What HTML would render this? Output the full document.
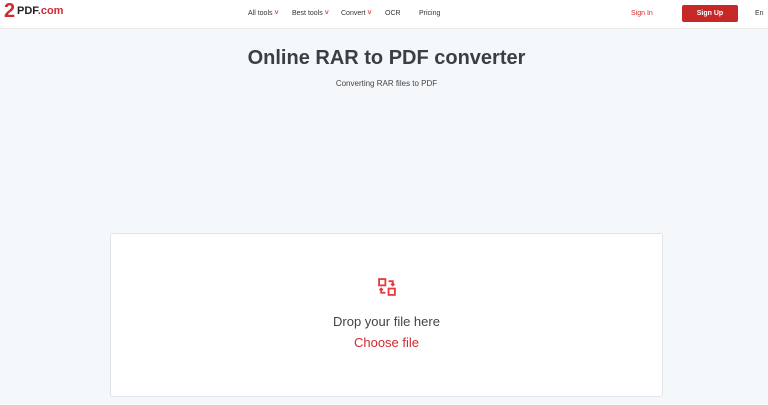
<!DOCTYPE html><html><head><style>
body{margin:0;width:768px;height:405px;background:#f5f8fb;font-family:"Liberation Sans",sans-serif;overflow:hidden;position:relative}
.hdr{position:absolute;top:0;left:0;width:768px;height:28px;background:#fff;border-bottom:1px solid #ececec}
.nav{position:absolute;top:10px;font-size:7px;color:#333}
.nav span{color:#e5393d;font-size:7px;font-weight:bold}
</style></head><body>
<div class="hdr">
<div style="position:absolute;left:4px;top:0px;font-size:20px;font-weight:bold;color:#d22a2f">2</div>
<div style="position:absolute;left:17px;top:5px;font-size:11px;font-weight:bold;color:#222">PDF<span style="color:#d22a2f">.com</span></div>
<div class="nav" style="left:248px">All tools <span>˅</span></div>
<div class="nav" style="left:292px">Best tools <span>˅</span></div>
<div class="nav" style="left:341px">Convert <span>˅</span></div>
<div class="nav" style="left:385px">OCR</div>
<div class="nav" style="left:419px">Pricing</div>
<div class="nav" style="left:631px;color:#d22a2f">Sign In</div>
<div style="position:absolute;left:682px;top:5px;width:56px;height:17px;background:#c62828;border-radius:2px;color:#fff;font-size:7px;font-weight:bold;text-align:center;line-height:17px">Sign Up</div>
<div class="nav" style="left:755px">En</div>
</div>
<div style="position:absolute;top:47px;width:773px;text-align:center;font-size:20px;font-weight:bold;color:#3a3f45">Online RAR to PDF converter</div>
<div style="position:absolute;top:79px;width:773px;text-align:center;font-size:8px;color:#444">Converting RAR files to PDF</div>
<div style="position:absolute;left:110px;top:233px;width:551px;height:162px;background:#fff;border:1px solid #e0e3e8;border-radius:3px">
<svg style="position:absolute;left:267px;top:44px" width="19" height="19" viewBox="0 0 18 18" fill="none" stroke="#e5393d" stroke-width="1.7"><rect x="1" y="1" width="6" height="6"/><rect x="10" y="10" width="6" height="6"/><path d="M10 3h4v4M12.5 5.5l1.5 1.5 1.5-1.5M7 14H3v-4M1.5 11.5L3 10l1.5 1.5"/></svg>
<div style="position:absolute;top:80px;width:551px;text-align:center;font-size:13px;color:#444">Drop your file here</div>
<div style="position:absolute;top:101px;width:551px;text-align:center;font-size:13px;color:#d22a2f">Choose file</div>
</div>
</body></html>
